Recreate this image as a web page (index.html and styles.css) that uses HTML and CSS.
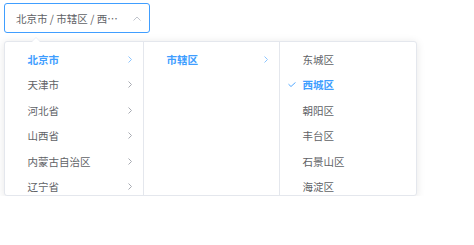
FILE: index.html
```html
<!DOCTYPE html>
<html lang="zh-CN">
<head>
<meta charset="utf-8">
<title>Cascader</title>
<link rel="stylesheet" href="styles.css">
</head>
<body>
<div class="page">
  <div class="cascader-input">
    <div class="input-text">北京市 / 市辖区 / 西城区</div>
    <svg class="input-arrow" width="8" height="5" viewBox="0 0 8 5"><path d="M0.5 4.5 L4 1 L7.5 4.5" fill="none" stroke="#c0c4cc" stroke-width="1"/></svg>
  </div>
  <div class="dropdown">
    <span class="popper-arrow"></span>
    <div class="menu menu-1">
      <div class="node active"><span class="label">北京市</span><svg class="chev" width="4" height="7" viewBox="0 0 4 7"><path d="M0.5 0.5 L3.5 3.5 L0.5 6.5" fill="none" stroke-width="1"/></svg></div>
      <div class="node"><span class="label">天津市</span><svg class="chev" width="4" height="7" viewBox="0 0 4 7"><path d="M0.5 0.5 L3.5 3.5 L0.5 6.5" fill="none" stroke-width="1"/></svg></div>
      <div class="node"><span class="label">河北省</span><svg class="chev" width="4" height="7" viewBox="0 0 4 7"><path d="M0.5 0.5 L3.5 3.5 L0.5 6.5" fill="none" stroke-width="1"/></svg></div>
      <div class="node"><span class="label">山西省</span><svg class="chev" width="4" height="7" viewBox="0 0 4 7"><path d="M0.5 0.5 L3.5 3.5 L0.5 6.5" fill="none" stroke-width="1"/></svg></div>
      <div class="node"><span class="label">内蒙古自治区</span><svg class="chev" width="4" height="7" viewBox="0 0 4 7"><path d="M0.5 0.5 L3.5 3.5 L0.5 6.5" fill="none" stroke-width="1"/></svg></div>
      <div class="node"><span class="label">辽宁省</span><svg class="chev" width="4" height="7" viewBox="0 0 4 7"><path d="M0.5 0.5 L3.5 3.5 L0.5 6.5" fill="none" stroke-width="1"/></svg></div>
    </div>
    <div class="menu menu-2">
      <div class="node active"><span class="label">市辖区</span><svg class="chev" width="4" height="7" viewBox="0 0 4 7"><path d="M0.5 0.5 L3.5 3.5 L0.5 6.5" fill="none" stroke-width="1"/></svg></div>
    </div>
    <div class="menu menu-3">
      <div class="node leaf"><span class="mark"></span><span class="label">东城区</span></div>
      <div class="node leaf active"><span class="mark"><svg width="8" height="5" viewBox="0 0 8 5"><path d="M0.5 2.2 L3 4.5 L7.5 0.4" fill="none" stroke="#409eff" stroke-width="0.9"/></svg></span><span class="label">西城区</span></div>
      <div class="node leaf"><span class="mark"></span><span class="label">朝阳区</span></div>
      <div class="node leaf"><span class="mark"></span><span class="label">丰台区</span></div>
      <div class="node leaf"><span class="mark"></span><span class="label">石景山区</span></div>
      <div class="node leaf"><span class="mark"></span><span class="label">海淀区</span></div>
    </div>
  </div>
</div>
</body>
</html>
```

FILE: styles.css
```css
html, body {
  margin: 0;
  padding: 0;
  background: #ffffff;
}

body {
  font-family: "Noto Sans CJK SC", "Noto Sans", "Liberation Sans", sans-serif;
  font-size: 10.5px;
  color: #606266;
}

.page {
  padding: 3px 0 0 4px;
}

.cascader-input {
  box-sizing: border-box;
  width: 146px;
  height: 30px;
  border: 1px solid #409eff;
  border-radius: 3px;
  display: flex;
  align-items: center;
  padding: 0 8px 0 11px;
  background: #fff;
}

.input-text {
  flex: 1;
  min-width: 0;
  white-space: nowrap;
  overflow: hidden;
  text-overflow: ellipsis;
  margin-right: 7px;
  color: #606266;
}

.input-arrow {
  flex: none;
  display: block;
}

.dropdown {
  position: relative;
  display: inline-flex;
  margin-top: 8px;
  border: 1px solid #e4e7ed;
  border-radius: 3px;
  background: #fff;
  box-shadow: 0 1.5px 9px 0 rgba(0, 0, 0, 0.1);
}

.popper-arrow {
  position: absolute;
  top: -5px;
  left: 27px;
  width: 0;
  height: 0;
  border-left: 4.5px solid transparent;
  border-right: 4.5px solid transparent;
  border-bottom: 4.5px solid #ebeef5;
}

.popper-arrow::after {
  content: "";
  position: absolute;
  left: -4.5px;
  top: 1px;
  border-left: 4.5px solid transparent;
  border-right: 4.5px solid transparent;
  border-bottom: 4.5px solid #fff;
}

.menu {
  box-sizing: border-box;
  height: 153px;
  padding: 4.5px 0;
  overflow: hidden;
}

.menu-1 {
  width: 139px;
  border-right: 1px solid #e4e7ed;
}

.menu-2 {
  width: 136px;
  border-right: 1px solid #e4e7ed;
}

.menu-3 {
  width: 136px;
}

.node {
  display: flex;
  align-items: center;
  height: 25.5px;
  padding: 0 11.5px 0 22.5px;
  color: #606266;
}

.node .label {
  flex: 1;
  white-space: nowrap;
}

.node .chev {
  flex: none;
  display: block;
  stroke: #a8abb2;
}

.node.active {
  color: #409eff;
  font-weight: 700;
}

.node.active .chev {
  stroke: #8cc5ff;
}

.node.leaf {
  padding-left: 8px;
}

.mark {
  flex: none;
  width: 14.5px;
  display: flex;
  align-items: center;
}

.mark svg {
  display: block;
}
```
